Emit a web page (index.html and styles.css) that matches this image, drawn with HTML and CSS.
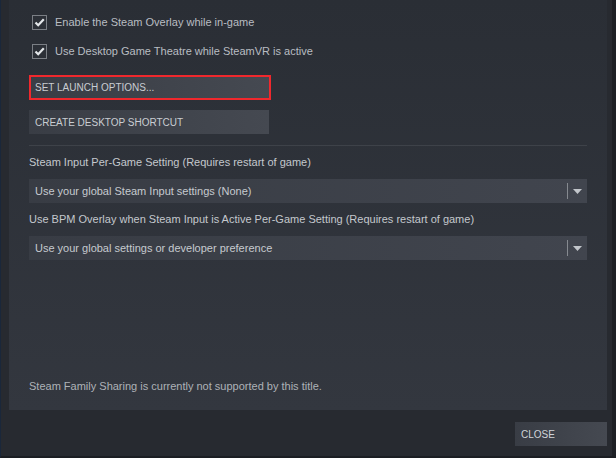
FILE: index.html
```html
<!DOCTYPE html>
<html>
<head>
<meta charset="utf-8">
<link rel="stylesheet" href="styles.css">
</head>
<body>
<div class="window">
  <div class="panel">
    <label class="check-row first">
      <span class="checkbox">
        <svg width="13" height="13" viewBox="0 0 13 13"><path d="M2.5 6.5 L5.2 9.2 L10.8 3.2" fill="none" stroke="#e4e7ea" stroke-width="2.2"/></svg>
      </span>
      <span class="check-label">Enable the Steam Overlay while in-game</span>
    </label>
    <label class="check-row second">
      <span class="checkbox">
        <svg width="13" height="13" viewBox="0 0 13 13"><path d="M2.5 6.5 L5.2 9.2 L10.8 3.2" fill="none" stroke="#e4e7ea" stroke-width="2.2"/></svg>
      </span>
      <span class="check-label">Use Desktop Game Theatre while SteamVR is active</span>
    </label>
    <div class="highlight">
      <button class="btn btn-launch">SET LAUNCH OPTIONS...</button>
    </div>
    <button class="btn btn-shortcut">CREATE DESKTOP SHORTCUT</button>
    <div class="separator"></div>
    <div class="field-label label-one">Steam Input Per-Game Setting (Requires restart of game)</div>
    <div class="dropdown drop-one">
      <span class="drop-text">Use your global Steam Input settings (None)</span>
      <span class="drop-divider"></span>
      <svg class="drop-arrow" width="9" height="5" viewBox="0 0 9 5"><polygon points="0,0 9,0 4.5,5" fill="#c2c6cb"/></svg>
    </div>
    <div class="field-label label-two">Use BPM Overlay when Steam Input is Active Per-Game Setting (Requires restart of game)</div>
    <div class="dropdown drop-two">
      <span class="drop-text">Use your global settings or developer preference</span>
      <span class="drop-divider"></span>
      <svg class="drop-arrow" width="9" height="5" viewBox="0 0 9 5"><polygon points="0,0 9,0 4.5,5" fill="#c2c6cb"/></svg>
    </div>
    <div class="note">Steam Family Sharing is currently not supported by this title.</div>
  </div>
  <div class="footer">
    <button class="btn btn-close">CLOSE</button>
  </div>
</div>
</body>
</html>
```

FILE: styles.css
```css
html, body {
  margin: 0;
  padding: 0;
  background: #1e2126;
}

body {
  width: 616px;
  height: 458px;
  overflow: hidden;
  font-family: "Liberation Sans", Arial, sans-serif;
}

.window {
  box-sizing: border-box;
  width: 616px;
  height: 458px;
  background: #272a30;
  border-left: 1px solid #1a273a;
  border-right: 4px solid #1d2025;
  border-bottom: 2px solid #1b1e23;
  display: flex;
  flex-direction: column;
}

.panel {
  box-sizing: border-box;
  margin-left: 8px;
  margin-right: 5px;
  height: 410px;
  padding: 0 20px 16px 20px;
  background: linear-gradient(to bottom, #2a2e35, #33373f);
  display: flex;
  flex-direction: column;
  align-items: flex-start;
}

.check-row {
  display: flex;
  align-items: center;
  height: 15px;
  margin-left: 3px;
}

.check-row.first { margin-top: 15px; }
.check-row.second { margin-top: 14px; }

.checkbox {
  box-sizing: border-box;
  width: 15px;
  height: 15px;
  border: 1px solid #7b7f85;
  background: #2c3037;
  display: flex;
  align-items: center;
  justify-content: center;
}

.checkbox svg { display: block; }

.check-label {
  margin-left: 8px;
  font-size: 11px;
  line-height: 15px;
  color: #b9bdc2;
}

.btn {
  font-family: "Liberation Sans", Arial, sans-serif;
  font-size: 10px;
  color: #c9cdd2;
  border: none;
  margin: 0;
  text-align: left;
  background: linear-gradient(to right, #393d45, #454951);
  padding: 0 0 0 6px;
  cursor: pointer;
}

.highlight {
  box-sizing: border-box;
  margin-top: 16px;
  width: 242px;
  height: 25px;
  border: 2px solid #f0282d;
  display: flex;
}

.btn-launch {
  flex: 1;
  height: 21px;
  padding-left: 4px;
}

.btn-shortcut {
  margin-top: 10px;
  width: 240px;
  height: 24px;
}

.separator {
  margin-top: 11px;
  width: 558px;
  height: 1px;
  background: #3e4249;
}

.field-label {
  font-size: 11px;
  line-height: 16px;
  color: #c4c8cd;
}

.label-one { margin-top: 8px; }
.label-two { margin-top: 8px; }

.dropdown {
  box-sizing: border-box;
  margin-top: 9px;
  width: 558px;
  height: 24px;
  background: linear-gradient(to right, #383c44, #41454e);
  display: flex;
  align-items: center;
  padding-left: 6px;
}

.drop-text {
  flex: 1;
  font-size: 11px;
  color: #c6cacf;
}

.drop-divider {
  width: 1px;
  height: 16px;
  background: #868a90;
  margin-right: 5px;
}

.drop-arrow {
  display: block;
  margin-right: 5px;
  margin-top: 1px;
}

.note {
  margin-top: auto;
  font-size: 11px;
  line-height: 16px;
  color: #aeb2b7;
}

.footer {
  flex: 1;
  display: flex;
  justify-content: flex-end;
  align-items: flex-start;
  padding-top: 12px;
  padding-right: 5px;
}

.btn-close {
  width: 92px;
  height: 24px;
  color: #d0d4d9;
}
```
